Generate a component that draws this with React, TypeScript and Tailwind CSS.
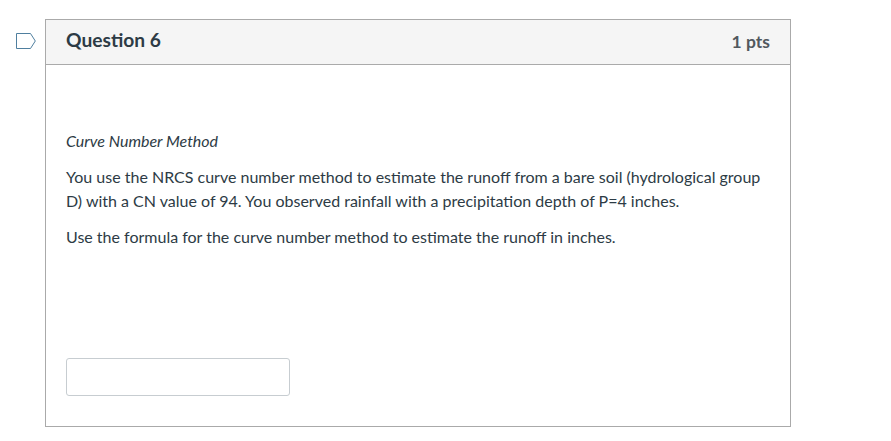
export default function App() {
  return (
    <div className="min-h-[441px] w-[891px] bg-white pt-[19px] pl-[16px] font-['Lato',sans-serif] text-[#2d3b45] flex items-start">
      {/* Flag marker */}
      <div className="w-[29px] pt-[14px] shrink-0">
        <svg width="20" height="16" viewBox="0 0 20 16" fill="none">
          <path d="M0.5 0.5H14.5L19.3 8L14.5 15.5H0.5Z" stroke="#4f7f9f" strokeWidth="1" />
        </svg>
      </div>

      {/* Question card */}
      <div className="w-[746px] h-[408px] border border-[#aaaaaa] flex flex-col">
        <div className="h-[45px] shrink-0 bg-[#f5f5f5] border-b border-[#aaaaaa] flex justify-between items-center px-[20px]">
          <h2 className="text-[19.2px] font-bold leading-[40px] pb-[4px]">Question 6</h2>
          <div className="text-[#51585e] text-[17.5px] font-bold">1 pts</div>
        </div>

        <div className="px-[20px] flex-1 flex flex-col">
          <p className="italic text-[16px] leading-[24px] mt-[64px]">Curve Number Method</p>
          <p className="text-[16px] leading-[24px] mt-[12px]">
            You use the NRCS curve number method to estimate the runoff from a bare soil (hydrological group
            <br />
            D) with a CN value of 94. You observed rainfall with a precipitation depth of P=4 inches.
          </p>
          <p className="text-[16px] leading-[24px] mt-[12px]">
            Use the formula for the curve number method to estimate the runoff in inches.
          </p>
          <input
            type="text"
            className="mt-[109px] w-[224px] h-[38px] bg-white border border-[#c7cdd1] rounded-[3px]"
          />
        </div>
      </div>
    </div>
  );
}
